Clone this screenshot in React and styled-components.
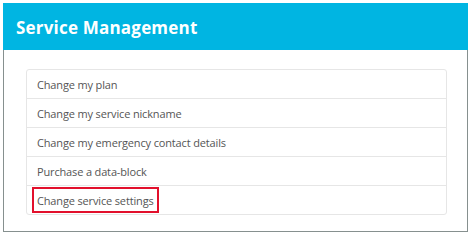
import React from 'react'
import styled, { createGlobalStyle } from 'styled-components'

const GlobalStyle = createGlobalStyle`
    body {
        margin: 0;
        background: #ffffff;
        font-family: "Open Sans", "Liberation Sans", sans-serif;
    }
`

const Page = styled.div`
    padding: 3px 0 0 3px;
`

const Panel = styled.section`
    width: 465px;
    height: 229px;
    box-sizing: border-box;
    border: 1px solid #86908f;
    border-top: none;
    display: flex;
    flex-direction: column;
`

const Header = styled.header`
    height: 47px;
    margin: 0 -1px;
    background: #00b5e2;
    display: flex;
    align-items: center;
    padding-left: 13px;
`

const Title = styled.h2`
    margin: 0;
    padding-top: 2px;
    color: #ffffff;
    font-size: 17px;
    font-weight: 700;
    letter-spacing: 0.2px;
`

const Body = styled.div`
    padding: 19px 20px 0 22px;
`

const List = styled.ul`
    list-style: none;
    margin: 0;
    padding: 0;
    border: 1px solid #e6e6e6;
    border-radius: 3px;
`

const Item = styled.li`
    height: 29px;
    box-sizing: border-box;
    display: flex;
    align-items: center;
    padding-left: ${(props) => (props.highlighted ? '5px' : '10px')};
    color: #555555;
    font-size: 11px;
    letter-spacing: -0.15px;
    border-top: 1px solid #e6e6e6;

    &:first-child {
        height: 28px;
        border-top: none;
    }
`

const Highlight = styled.span`
    display: flex;
    align-items: center;
    height: 26px;
    box-sizing: border-box;
    padding: 0 3px;
    border: 2px solid #e2102c;
`

const options = [
    'Change my plan',
    'Change my service nickname',
    'Change my emergency contact details',
    'Purchase a data-block',
    'Change service settings'
]

export default function App() {
    return (
        <Page>
            <GlobalStyle />
            <Panel>
                <Header>
                    <Title>Service Management</Title>
                </Header>
                <Body>
                    <List>
                        {options.map((label, i) => {
                            const last = i === options.length - 1
                            return (
                                <Item key={label} highlighted={last}>
                                    {last ? <Highlight>{label}</Highlight> : label}
                                </Item>
                            )
                        })}
                    </List>
                </Body>
            </Panel>
        </Page>
    )
}
